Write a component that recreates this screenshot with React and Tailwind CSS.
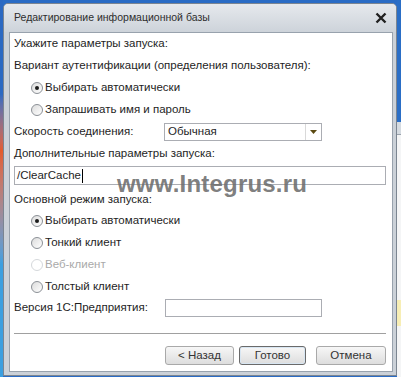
import clsx from "clsx";

function Radio({ label, checked, disabled }) {
  return (
    <div className="flex h-[22px] items-center pl-[17px]">
      <span
        className={clsx(
          "flex h-[12px] w-[12px] items-center justify-center rounded-full border",
          disabled
            ? "border-[#d5d8db] bg-white"
            : "border-[#8b9096] bg-linear-to-br from-[#dcdcdc] to-white"
        )}
      >
        {checked && <span className="h-[4px] w-[4px] rounded-full bg-[#1c1c1c]" />}
      </span>
      <span className={clsx("ml-[2px]", disabled ? "text-[#a9a9a9]" : "text-[#1e1e1e]")}>
        {label}
      </span>
    </div>
  );
}

function Button({ children, width, primary }) {
  return (
    <button
      className={clsx(
        "h-[19px] rounded-[3px] border bg-linear-to-b from-[#f7f7f7] to-[#dddddd] text-[11.5px] leading-none text-[#333]",
        width,
        primary ? "border-[#6a6a6a] shadow-[inset_0_0_0_1px_#d8e6f2]" : "border-[#a9a9a9]"
      )}
    >
      {children}
    </button>
  );
}

export default function App() {
  return (
    <div className="flex h-[377px] w-[401px] overflow-hidden bg-[#2a6cc5] font-['Liberation_Sans',Arial,sans-serif] text-[11.5px] text-[#1e1e1e]">
      {/* desktop strip, left */}
      <div className="w-[3px] bg-linear-to-b from-[#2b69c2] from-25% via-[#e35b2b] via-40% to-[#3b9fe0] to-70%" />

      <div className="flex w-[394px] flex-col pt-[3px] pb-[1px]">
        {/* window */}
        <div className="flex flex-1 flex-col rounded-t-[5px] border border-[#7b8591] bg-[#cbd1d8]">
          {/* title bar */}
          <div className="flex h-[28px] items-center justify-between rounded-t-[4px] bg-linear-to-b from-[#e6e9ed] to-[#cdd3da] pl-[10px] pr-[9px]">
            <span className="text-[10.5px] text-[#2e2e2e]">Редактирование информационной базы</span>
            <svg width="12" height="12" viewBox="0 0 12 12">
              <path d="M1.5 1.5 L10.5 10.5 M10.5 1.5 L1.5 10.5" stroke="#202020" strokeWidth="2.4" />
            </svg>
          </div>

          <div className="flex flex-1 px-[5px] pr-[3px] pb-[3px]">
            {/* client area */}
            <div className="relative flex flex-1 flex-col border border-[#98a2ad] bg-white pl-[4px] pr-[6px]">
              <div className="flex h-[22px] items-center">Укажите параметры запуска:</div>
              <div className="flex h-[22px] items-center">
                Вариант аутентификации (определения пользователя):
              </div>
              <Radio label="Выбирать автоматически" checked />
              <Radio label="Запрашивать имя и пароль" />

              <div className="flex h-[22px] items-center">
                <span className="w-[150px]">Скорость соединения:</span>
                <div className="flex h-[18px] w-[158px] border border-[#abadb3]">
                  <span className="flex flex-1 items-center pl-[3px]">Обычная</span>
                  <span className="flex w-[16px] items-center justify-center border-l border-[#d9d9d9]">
                    <svg width="7" height="4" viewBox="0 0 7 4">
                      <path d="M0 0 H7 L3.5 4 Z" fill="#5b4a12" />
                    </svg>
                  </span>
                </div>
              </div>

              <div className="flex h-[22px] items-center">Дополнительные параметры запуска:</div>
              <div className="h-[24px] pt-[1px]">
                <div className="flex h-[19px] items-center border border-[#abadb3] pl-[2px]">
                  /ClearCache
                  <span className="ml-px h-[14px] w-px bg-black" />
                </div>
              </div>

              <div className="flex h-[21px] items-center">Основной режим запуска:</div>
              <Radio label="Выбирать автоматически" checked />
              <Radio label="Тонкий клиент" />
              <Radio label="Веб-клиент" disabled />
              <Radio label="Толстый клиент" />

              <div className="flex h-[20px] items-center">
                <span className="w-[151px]">Версия 1С:Предприятия:</span>
                <div className="h-[18px] w-[157px] border border-[#abadb3]" />
              </div>

              <div className="mt-[15px] h-px bg-[#a0a0a0]" />

              <div className="mt-[12px] flex justify-end">
                <Button width="w-[69px]">&lt; Назад</Button>
                <div className="w-[5px]" />
                <Button width="w-[67px]" primary>
                  Готово
                </Button>
                <div className="w-[10px]" />
                <Button width="w-[70px]">Отмена</Button>
              </div>

              {/* watermark */}
              <span className="absolute top-[139px] left-[107px] text-[24px] font-bold leading-none tracking-[0.2px] text-[#6e6e6e]/90">
                www.Integrus.ru
              </span>
            </div>
          </div>
        </div>
      </div>

      {/* desktop strip, right: edge of another window */}
      <div className="flex w-[4px] flex-col">
        <div className="h-[122px] bg-[#2a6ec6]" />
        <div className="h-[12px] bg-[#d5dbe1]" />
        <div className="h-px bg-[#9aa3ad]" />
        <div className="h-[165px] bg-[#f4f5f6]" />
        <div className="h-[26px] bg-[#f7eeb5]" />
        <div className="flex-1 bg-[#f4f5f6]" />
      </div>
    </div>
  );
}
